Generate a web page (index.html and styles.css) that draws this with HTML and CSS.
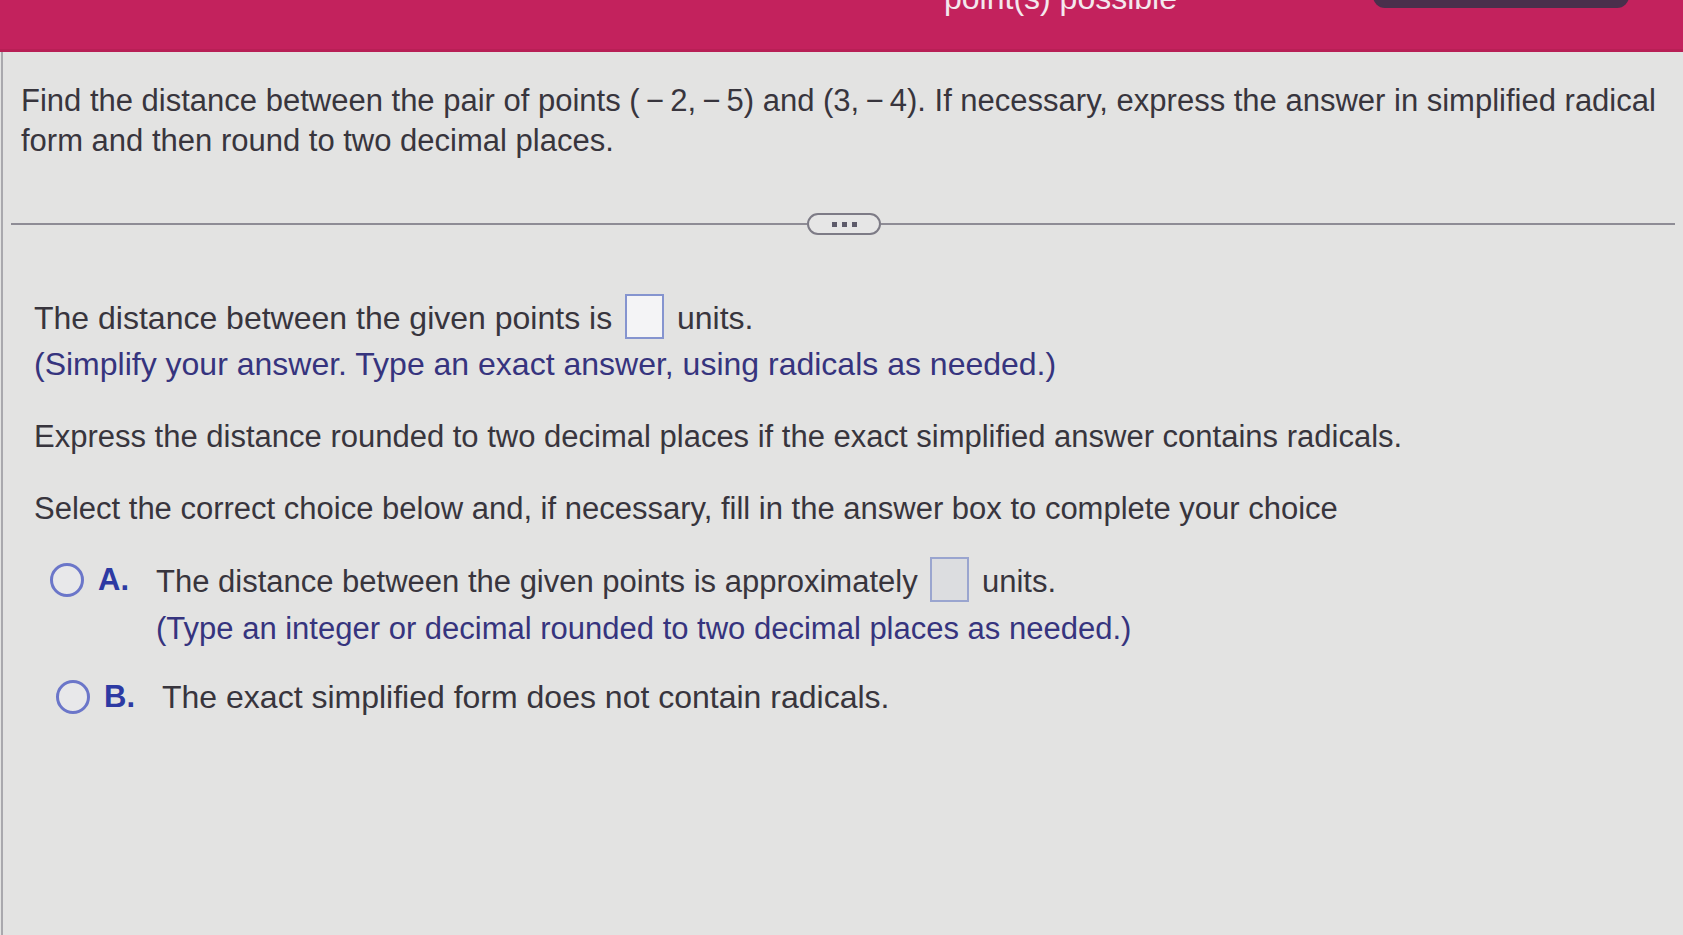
FILE: index.html
```html
<!DOCTYPE html>
<html lang="en">
<head>
<meta charset="utf-8">
<title>Distance between points</title>
<link rel="stylesheet" href="styles.css">
</head>
<body>
<header class="topbar">
  <div class="topbar-inner">
    <span class="points">point(s) possible</span>
    <span class="topbar-btn"></span>
  </div>
</header>
<main class="panel">
  <p class="question">Find the distance between the pair of points (&#8201;&minus;&#8201;2,&#8201;&minus;&#8201;5) and (3,&#8201;&minus;&#8201;4). If necessary, express the answer in simplified radical form and then round to two decimal places.</p>

  <div class="divider">
    <span class="divider-line"></span>
    <span class="more-pill"><i></i><i></i><i></i></span>
    <span class="divider-line"></span>
  </div>

  <section class="answers">
    <p class="line lead">The distance between the given points is <span class="answer-box"></span> units.</p>
    <p class="hint lead">(Simplify your answer. Type an exact answer, using radicals as needed.)</p>
    <p class="line gap-top">Express the distance rounded to two decimal places if the exact simplified answer contains radicals.</p>
    <p class="line gap-top">Select the correct choice below and, if necessary, fill in the answer box to complete your choice</p>

    <div class="choice">
      <span class="radio"></span>
      <span class="label">A.</span>
      <div class="choice-body">
        <p class="line">The distance between the given points is approximately <span class="answer-box filled"></span> units.</p>
        <p class="hint">(Type an integer or decimal rounded to two decimal places as needed.)</p>
      </div>
    </div>

    <div class="choice choice-b">
      <span class="radio"></span>
      <span class="label">B.</span>
      <div class="choice-body">
        <p class="line wide">The exact simplified form does not contain radicals.</p>
      </div>
    </div>
  </section>
</main>
</body>
</html>
```

FILE: styles.css
```css
* { box-sizing: border-box; }

html, body {
  margin: 0;
  padding: 0;
  height: 100%;
}

body {
  background: #e3e3e2;
  font-family: "Liberation Sans", Arial, Helvetica, sans-serif;
  color: #38353d;
  overflow: hidden;
  display: flex;
  flex-direction: column;
}

.topbar {
  height: 52px;
  background: #c3225d;
  border-bottom: 3px solid #b81f55;
  overflow: hidden;
  flex: none;
}

.topbar-inner {
  display: flex;
  align-items: flex-start;
  margin-top: -18px;
  padding-left: 944px;
}

.points {
  color: #f4e8ee;
  font-size: 32px;
  line-height: 32px;
}

.topbar-btn {
  width: 256px;
  height: 26px;
  margin-left: 196px;
  background: #4a2f4c;
  border-radius: 0 0 12px 12px;
}

.panel {
  flex: 1;
  border-left: 2px solid #a9a8ad;
  margin-left: 1px;
  padding: 0 0 0 18px;
}

p { margin: 0; }

.question {
  font-size: 31px;
  line-height: 40px;
  padding-top: 29px;
  max-width: 1650px;
}

.divider {
  display: flex;
  align-items: center;
  margin: 52px 8px 0 -10px;
}

.divider-line {
  flex: 1;
  height: 2px;
  background: #8e8c95;
}

.divider-line:first-child { flex: none; width: 796px; }

.more-pill {
  display: flex;
  align-items: center;
  justify-content: center;
  gap: 5px;
  width: 74px;
  height: 22px;
  border: 2px solid #7d7b86;
  border-radius: 11px;
  background: #e6e6e6;
}

.more-pill i {
  width: 5px;
  height: 5px;
  background: #5d5b6a;
}

.answers {
  padding-left: 13px;
  padding-top: 59px;
}

.line {
  font-size: 31px;
  line-height: 46px;
  color: #38353d;
}

.hint {
  font-size: 31px;
  line-height: 47px;
  color: #36347e;
}

.lead { font-size: 32px; }

.wide { font-size: 32px; }

.gap-top { margin-top: 26px; }

.answer-box {
  display: inline-block;
  width: 39px;
  height: 45px;
  border: 2px solid #8594cf;
  background: #f4f4f6;
  vertical-align: -10px;
  margin: 0 4px;
}

.answer-box.filled {
  background: #dcdde0;
  border-color: #9aa5cf;
}

.choice {
  display: flex;
  align-items: flex-start;
  margin-top: 25px;
  padding-left: 16px;
}

.choice-b {
  margin-top: 22px;
  padding-left: 22px;
}

.radio {
  flex: none;
  width: 34px;
  height: 34px;
  border: 3px solid #6b76c9;
  border-radius: 50%;
  margin-top: 6px;
  background: #e8e8ea;
}

.label {
  flex: none;
  width: 58px;
  margin-left: 14px;
  font-size: 31px;
  line-height: 46px;
  font-weight: bold;
  color: #2d3aa3;
}
```
